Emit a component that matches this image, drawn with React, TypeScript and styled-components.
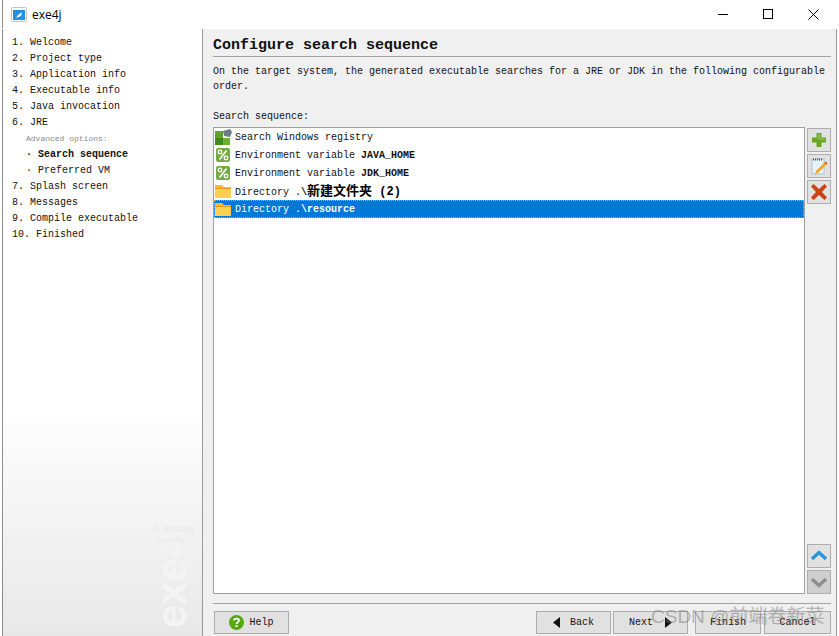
import React, { FC } from "react";
import styled, { createGlobalStyle } from "styled-components";

const MONO = `"Liberation Mono", "Noto Sans CJK SC", monospace`;

const GlobalStyle = createGlobalStyle`
  html, body {
    margin: 0;
    padding: 0;
    background: #ffffff;
    overflow: hidden;
  }
  * {
    box-sizing: border-box;
  }
`;

const Window = styled.div`
  position: relative;
  width: 839px;
  height: 636px;
  display: flex;
  flex-direction: column;
  padding: 0 2px;
  background: #ffffff;
  font-family: ${MONO};
  font-size: 10px;
  color: #111111;
  overflow: hidden;
`;

const TitleBar = styled.div`
  height: 28px;
  display: flex;
  align-items: center;
  padding-left: 8px;
  border-left: 1px solid #8c8c8c;
  margin-bottom: 1px;
`;

const AppName = styled.span`
  margin-left: 5px;
  font-family: "Open Sans", "Liberation Sans", sans-serif;
  font-size: 12px;
  color: #000000;
`;

const Controls = styled.div`
  margin-left: auto;
  display: flex;
  align-items: center;
  gap: 35px;
  padding-right: 18px;
`;

const Body = styled.div`
  flex: 1;
  display: flex;
  min-height: 0;
`;

const Sidebar = styled.nav`
  position: relative;
  width: 201px;
  padding: 6px 0 0 9px;
  border-left: 1px solid #8c8c8c;
  border-right: 1px solid #9a9a9a;
  background: linear-gradient(180deg, #ffffff 0%, #ffffff 62%, #e8e8e8 100%);
  overflow: hidden;
`;

const StepRow = styled.div<{ $indent?: number; $bold?: boolean; $muted?: boolean }>`
  height: 16px;
  line-height: 16px;
  white-space: pre;
  padding-left: ${(p) => p.$indent ?? 0}px;
  font-weight: ${(p) => (p.$bold ? 700 : 400)};
  color: ${(p) => (p.$muted ? "#8a8a8a" : "#111111")};
  font-size: ${(p) => (p.$muted ? "8px" : "10px")};
`;

const Brand = styled.div`
  position: absolute;
  left: 147px;
  bottom: 8px;
  font-family: "Liberation Sans", sans-serif;
  font-weight: 700;
  font-size: 42px;
  line-height: 44px;
  writing-mode: vertical-rl;
  transform: rotate(180deg);
  background: linear-gradient(to bottom, #f4f4f4 0%, #f4f4f4 76%, #ededed 84%, #ededed 100%);
  -webkit-background-clip: text;
  background-clip: text;
  color: transparent;
`;

const Main = styled.main`
  flex: 1;
  display: flex;
  flex-direction: column;
  min-width: 0;
  padding: 0 5px 2px 10px;
  background: #f0f0f0;
  border-right: 1px solid #9a9a9a;
`;

const Heading = styled.h1`
  margin: 0;
  height: 28px;
  padding-top: 6px;
  line-height: 22px;
  font-size: 15px;
  font-weight: 700;
  color: #111111;
  border-bottom: 1px solid #a3a3a3;
`;

const Description = styled.p`
  margin: 7px 0 0;
  line-height: 15px;
  width: 625px;
`;

const FieldLabel = styled.div`
  margin-top: 15px;
  margin-bottom: 3px;
  height: 15px;
  line-height: 15px;
`;

const ListArea = styled.div`
  flex: 1;
  display: flex;
  gap: 2px;
  min-height: 0;
`;

const SequenceList = styled.ul`
  flex: 1;
  margin: 0;
  padding: 0;
  list-style: none;
  background: #ffffff;
  border: 1px solid #a0a0a0;
  height: 467px;
`;

const SequenceRow = styled.li<{ $selected?: boolean }>`
  height: 18px;
  display: flex;
  align-items: center;
  gap: 3px;
  white-space: pre;
  padding-left: 1px;
  color: ${(p) => (p.$selected ? "#ffffff" : "#111111")};
  background: ${(p) => (p.$selected ? "#0078d7" : "transparent")};
  outline: ${(p) => (p.$selected ? "1px dotted #f0a030" : "none")};
  outline-offset: -1px;
`;

const Strong = styled.b`
  font-weight: 700;
`;

const RowLine = styled.span`
  line-height: 12px;
`;

const CjkPath = styled.b`
  font-family: "Noto Sans CJK SC", sans-serif;
  font-size: 13px;
  line-height: 12px;
  font-weight: 700;
  color: #000000;
`;

const PathSuffix = styled.b`
  font-size: 12px;
  font-weight: 700;
  color: #000000;
`;

const SideButtons = styled.div`
  width: 24px;
  height: 467px;
  display: flex;
  flex-direction: column;
  gap: 2px;
  padding-top: 1px;
`;

const SquareButton = styled.button<{ $disabled?: boolean; $pushDown?: boolean }>`
  width: 24px;
  height: 24px;
  padding: 0;
  display: flex;
  align-items: center;
  justify-content: center;
  background: ${(p) => (p.$disabled ? "#cfcfcf" : "#e1e1e1")};
  border: 1px solid #adadad;
  margin-top: ${(p) => (p.$pushDown ? "auto" : "0")};
`;

const Footer = styled.footer`
  margin-top: 9px;
  padding: 7px 0 0 1px;
  border-top: 1px solid #a3a3a3;
  display: flex;
  align-items: center;
  height: 31px;
`;

const PushButton = styled.button<{ $width: number; $gap?: number }>`
  width: ${(p) => p.$width}px;
  height: 23px;
  padding: 0;
  display: flex;
  align-items: center;
  justify-content: center;
  gap: ${(p) => p.$gap ?? 5}px;
  background: #e1e1e1;
  border: 1px solid #adadad;
  font-family: ${MONO};
  font-size: 10px;
  color: #111111;
`;

const NavGroup = styled.div`
  display: flex;
  gap: 2px;
  margin-left: auto;
`;

const FinishGroup = styled.div`
  display: flex;
  gap: 3px;
  margin-left: 7px;
`;

const Watermark = styled.div`
  position: absolute;
  left: 651px;
  top: 605px;
  font-family: "Liberation Sans", "Noto Sans CJK SC", sans-serif;
  font-size: 19px;
  line-height: 24px;
  color: rgba(120, 120, 120, 0.5);
  white-space: pre;
`;

const AppIcon: FC = () => (
  <svg width="16" height="15" viewBox="0 0 16 15">
    <rect x="0.5" y="0.5" width="15" height="14" rx="1" fill="#ffffff" stroke="#c4c4c4" />
    <rect x="2" y="3" width="12" height="10" fill="#1f8fe8" />
    <path d="M5 11 L7 8 L11 5 L10 9 L7.5 10 Z" fill="#ffffff" />
  </svg>
);

const WindowControls: FC = () => (
  <Controls>
    <svg width="10" height="10" viewBox="0 0 10 10">
      <path d="M0 5.5H10" stroke="#000" />
    </svg>
    <svg width="10" height="10" viewBox="0 0 10 10">
      <rect x="0.5" y="0.5" width="9" height="9" fill="none" stroke="#000" />
    </svg>
    <svg width="11" height="11" viewBox="0 0 11 11">
      <path d="M0.5 0.5L10.5 10.5M10.5 0.5L0.5 10.5" stroke="#000" />
    </svg>
  </Controls>
);

const RegistryIcon: FC = () => (
  <svg width="17" height="16" viewBox="0 0 17 16">
    <rect x="0" y="2" width="8" height="7" fill="#5da52a" />
    <rect x="0" y="9" width="8" height="7" fill="#3f8a1c" />
    <rect x="8" y="9" width="7" height="7" fill="#68b32e" />
    <path d="M8 2L15 0L17 3L15 8L9 7Z" fill="#6b7b85" />
  </svg>
);

const PercentIcon: FC = () => (
  <svg width="17" height="16" viewBox="0 0 17 16">
    <rect x="1" y="1" width="14" height="14" rx="2" fill="#74ab46" />
    <circle cx="5" cy="5" r="1.8" fill="none" stroke="#ffffff" strokeWidth="1.3" />
    <circle cx="11" cy="11" r="1.8" fill="none" stroke="#ffffff" strokeWidth="1.3" />
    <path d="M11.5 3.5L4.5 12.5" stroke="#ffffff" strokeWidth="1.6" />
  </svg>
);

const FolderIcon: FC = () => (
  <svg width="17" height="16" viewBox="0 0 17 16">
    <path d="M0 2H7L9 4H16V15H0Z" fill="#fbb92f" />
    <path d="M0 6H16V15H0Z" fill="#fdd04f" />
    <path d="M0 5.5H16" stroke="#e69a14" />
  </svg>
);

const PlusIcon: FC = () => (
  <svg width="16" height="16" viewBox="0 0 16 16">
    <path d="M5.5 1H10.5V5.5H15V10.5H10.5V15H5.5V10.5H1V5.5H5.5Z" fill="#6aa42a" />
    <path d="M6.5 2H9.5V6.5H14V8H6.5Z" fill="#86bd3f" />
  </svg>
);

const NoteIcon: FC = () => (
  <svg width="18" height="18" viewBox="0 0 18 18">
    <rect x="2" y="2" width="12" height="15" fill="#e6f2fa" stroke="#a9c4d6" />
    <path d="M3 2.5H13" stroke="#555" strokeDasharray="1 1" strokeWidth="2" />
    <path d="M6 14L15 5L17 7L8 16L5 17Z" fill="#f5a623" />
    <path d="M14.5 5.5L15.5 4.5L17.5 6.5L16.5 7.5Z" fill="#d9452b" />
  </svg>
);

const CrossIcon: FC = () => (
  <svg width="18" height="18" viewBox="0 0 18 18">
    <path d="M3.5 1L9 6L14.5 1L17 3.5L12 9L17 14.5L14.5 17L9 12L3.5 17L1 14.5L6 9L1 3.5Z" fill="#cc4313" />
  </svg>
);

const ChevronIcon: FC<{ up?: boolean; color: string }> = ({ up, color }) => (
  <svg width="16" height="12" viewBox="0 0 16 12">
    <path
      d={up ? "M1 9L8 2.5L15 9" : "M1 3L8 9.5L15 3"}
      fill="none"
      stroke={color}
      strokeWidth="3.4"
    />
  </svg>
);

const HelpIcon: FC = () => (
  <svg width="15" height="15" viewBox="0 0 15 15">
    <circle cx="7.5" cy="7.5" r="7.5" fill="#56a80f" />
    <path
      d="M5 5.6C5 3 10 3 10 5.6C10 7.4 7.5 7.3 7.5 9"
      fill="none"
      stroke="#ffffff"
      strokeWidth="1.8"
    />
    <rect x="6.5" y="10" width="2" height="2" fill="#ffffff" />
  </svg>
);

const TriangleIcon: FC<{ right?: boolean }> = ({ right }) => (
  <svg width="7" height="11" viewBox="0 0 7 11">
    <path d={right ? "M0 0L7 5.5L0 11Z" : "M7 0L0 5.5L7 11Z"} fill="#111111" />
  </svg>
);

const App: FC = () => {
  return (
    <Window>
      <GlobalStyle />
      <TitleBar>
        <AppIcon />
        <AppName>exe4j</AppName>
        <WindowControls />
      </TitleBar>
      <Body>
        <Sidebar>
          <StepRow>1. Welcome</StepRow>
          <StepRow>2. Project type</StepRow>
          <StepRow>3. Application info</StepRow>
          <StepRow>4. Executable info</StepRow>
          <StepRow>5. Java invocation</StepRow>
          <StepRow>6. JRE</StepRow>
          <StepRow $indent={14} $muted>
            Advanced options:
          </StepRow>
          <StepRow $indent={14} $bold>
            {"· Search sequence"}
          </StepRow>
          <StepRow $indent={14}>{"· Preferred VM"}</StepRow>
          <StepRow>7. Splash screen</StepRow>
          <StepRow>8. Messages</StepRow>
          <StepRow>9. Compile executable</StepRow>
          <StepRow>10. Finished</StepRow>
          <Brand>exe4j</Brand>
        </Sidebar>
        <Main>
          <Heading>Configure search sequence</Heading>
          <Description>
            On the target system, the generated executable searches for a JRE or JDK in the
            following configurable order.
          </Description>
          <FieldLabel>Search sequence:</FieldLabel>
          <ListArea>
            <SequenceList>
              <SequenceRow>
                <RegistryIcon />
                Search Windows registry
              </SequenceRow>
              <SequenceRow>
                <PercentIcon />
                <span>
                  Environment variable <Strong>JAVA_HOME</Strong>
                </span>
              </SequenceRow>
              <SequenceRow>
                <PercentIcon />
                <span>
                  Environment variable <Strong>JDK_HOME</Strong>
                </span>
              </SequenceRow>
              <SequenceRow>
                <FolderIcon />
                <RowLine>
                  Directory .<Strong>\</Strong>
                  <CjkPath>新建文件夹</CjkPath>
                  <PathSuffix> (2)</PathSuffix>
                </RowLine>
              </SequenceRow>
              <SequenceRow $selected>
                <FolderIcon />
                <span>
                  Directory .<Strong>\resource</Strong>
                </span>
              </SequenceRow>
            </SequenceList>
            <SideButtons>
              <SquareButton>
                <PlusIcon />
              </SquareButton>
              <SquareButton>
                <NoteIcon />
              </SquareButton>
              <SquareButton>
                <CrossIcon />
              </SquareButton>
              <SquareButton $pushDown>
                <ChevronIcon up color="#2b95d9" />
              </SquareButton>
              <SquareButton $disabled>
                <ChevronIcon color="#8f8f8f" />
              </SquareButton>
            </SideButtons>
          </ListArea>
          <Footer>
            <PushButton $width={75}>
              <HelpIcon />
              Help
            </PushButton>
            <NavGroup>
              <PushButton $width={75} $gap={10}>
                <TriangleIcon />
                Back
              </PushButton>
              <PushButton $width={75} $gap={12}>
                Next
                <TriangleIcon right />
              </PushButton>
            </NavGroup>
            <FinishGroup>
              <PushButton $width={66}>Finish</PushButton>
              <PushButton $width={67}>Cancel</PushButton>
            </FinishGroup>
          </Footer>
        </Main>
      </Body>
      <Watermark>CSDN @前端卷新菜</Watermark>
    </Window>
  );
};

export default App;
